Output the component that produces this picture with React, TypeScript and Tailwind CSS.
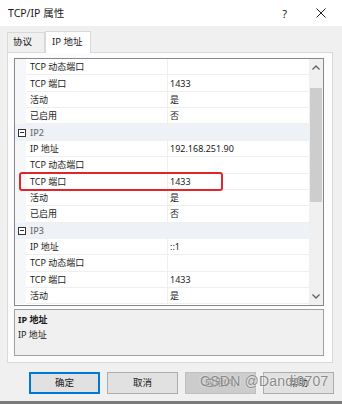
import React from "react";

type Row = { n?: string; v?: string; cat?: string };

const rows: Row[] = [
  { n: "TCP 动态端口", v: "" },
  { n: "TCP 端口", v: "1433" },
  { n: "活动", v: "是" },
  { n: "已启用", v: "否" },
  { cat: "IP2" },
  { n: "IP 地址", v: "192.168.251.90" },
  { n: "TCP 动态端口", v: "" },
  { n: "TCP 端口", v: "1433" },
  { n: "活动", v: "是" },
  { n: "已启用", v: "否" },
  { cat: "IP3" },
  { n: "IP 地址", v: "::1" },
  { n: "TCP 动态端口", v: "" },
  { n: "TCP 端口", v: "1433" },
  { n: "活动", v: "是" },
];

function Chevron({ up }: { up?: boolean }) {
  return (
    <svg width="8" height="5" viewBox="0 0 8 5">
      <polyline
        points={up ? "0.5,4.5 4,1 7.5,4.5" : "0.5,0.5 4,4 7.5,0.5"}
        fill="none"
        stroke="#606060"
        strokeWidth="1.3"
      />
    </svg>
  );
}

function MinusBox() {
  return (
    <div className="w-[8px] h-[8px] border border-[#333] flex items-center justify-center bg-white">
      <div className="w-[4px] h-px bg-[#333]" />
    </div>
  );
}

export default function App() {
  return (
    <div className="relative w-[342px] h-[404px] overflow-hidden bg-[#f0f0f0] text-[#1a1a1a] font-['Noto_Sans','Noto_Sans_CJK_SC',sans-serif]">
      {/* title bar */}
      <div className="h-[26px] bg-white flex items-center pl-[8px]">
        <span className="text-[10.5px] leading-none">TCP/IP 属性</span>
        <span className="ml-auto mr-[29px] text-[11px] leading-none text-[#222]">?</span>
        <svg width="10" height="10" viewBox="0 0 10 10" className="mr-[16px]">
          <path d="M0.5 0.5 L9.5 9.5 M9.5 0.5 L0.5 9.5" stroke="#222" strokeWidth="1" />
        </svg>
      </div>

      {/* tabs */}
      <div className="h-[26px] flex items-end pl-[7px]">
        <div className="h-[20px] w-[38px] border border-b-0 border-[#d9d9d9] bg-[#f0f0f0] flex items-center pl-[5px] text-[9.5px]">
          协议
        </div>
        <div className="relative z-10 -mb-px h-[22px] w-[46px] border border-b-0 border-[#d9d9d9] bg-white flex items-center pl-[6px] text-[9.5px]">
          IP 地址
        </div>
      </div>

      {/* panel */}
      <div className="ml-[7px] w-[326px] h-[311px] border border-[#d9d9d9] bg-[#fcfcfc] pl-[6px] pt-[5px]">
        {/* property grid */}
        <div className="w-[310px] h-[248px] border border-[#828790] bg-white flex overflow-hidden">
          <div className="flex-1 flex flex-col overflow-hidden">
            {rows.map((r, i) =>
              r.cat ? (
                <div key={i} className="h-[16.36px] shrink-0 flex items-center bg-[#eef1f5]">
                  <div className="w-[11px] flex justify-center pl-[2px]">
                    <MinusBox />
                  </div>
                  <span className="pl-[4px] text-[9px] text-[#6f6f6f] font-medium">{r.cat}</span>
                </div>
              ) : (
                <div key={i} className="h-[16.36px] shrink-0 flex">
                  <div className="w-[11px] bg-[#f6f7f9]" />
                  <div className="w-[142px] border-b border-r border-[#efefef] flex items-center pl-[4px] text-[9px] leading-none">
                    {r.n}
                  </div>
                  <div className="flex-1 border-b border-[#efefef] flex items-center pl-[2px] text-[9px] leading-none">
                    {r.v}
                  </div>
                </div>
              )
            )}
          </div>
          {/* scrollbar */}
          <div className="w-[14px] bg-[#f0f0f0] flex flex-col">
            <div className="h-[17px] flex items-center justify-center">
              <Chevron up />
            </div>
            <div className="flex-1">
              <div className="mt-[12px] h-[114px] mx-[1px] bg-[#cdcdcd]" />
            </div>
            <div className="h-[17px] flex items-center justify-center">
              <Chevron />
            </div>
          </div>
        </div>

        {/* description */}
        <div className="mt-[3px] w-[310px] h-[47px] border border-[#a0a0a0] bg-[#f0f0f0] pl-[3px] pt-[2px]">
          <div className="text-[9px] leading-[15px] font-bold">IP 地址</div>
          <div className="text-[9px] leading-[15px]">IP 地址</div>
        </div>
      </div>

      {/* buttons */}
      <div className="mt-[9px] flex pl-[29px] gap-[7px]">
        <button className="w-[71px] h-[22px] border-2 border-[#0078d7] bg-[#e1e1e1] text-[9.5px]">确定</button>
        <button className="w-[71px] h-[22px] border border-[#adadad] bg-[#e1e1e1] text-[9.5px]">取消</button>
        <button className="w-[71px] h-[22px] border border-[#bfbfbf] bg-[#cccccc] text-[9.5px] text-[#838383]">应用(A)</button>
        <button className="w-[71px] h-[22px] border border-[#adadad] bg-[#e1e1e1] text-[9.5px]">帮助</button>
      </div>

      {/* red annotation box */}
      <div className="absolute left-[19px] top-[172px] w-[204px] h-[19px] border-2 border-[#e0262a] rounded-[3px]" />

      {/* watermark */}
      <div className="absolute left-[200px] top-[374px] text-[14px] leading-none tracking-[0.2px] text-[#8a8a8a] font-['Liberation_Sans',sans-serif] [text-shadow:0_0_2px_#ffffff]">
        CSDN @Dandi0707
      </div>

      {/* bottom edge */}
      <div className="absolute left-0 right-0 bottom-0 h-[3px] bg-[#7a7a7a]" />
    </div>
  );
}
